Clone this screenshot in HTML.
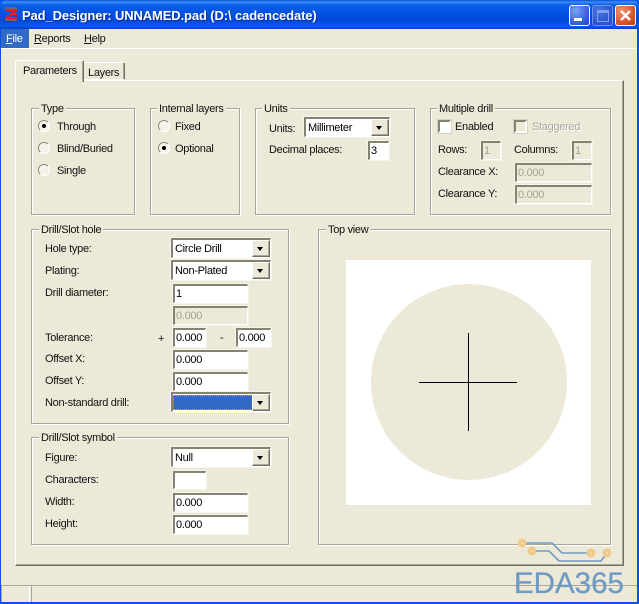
<!DOCTYPE html>
<html><head><meta charset="utf-8">
<style>
html,body{margin:0;padding:0;background:#fff}
#w{position:relative;width:639px;height:604px;overflow:hidden;background:#0a52e6;font:11px/14px "Liberation Sans",sans-serif;letter-spacing:-.3px;color:#111}
#w div,#w span.a{position:absolute;box-sizing:border-box}
.t{white-space:nowrap;margin-top:1px}
.g{border:1px solid #a8a595;box-shadow:1px 1px 0 #fff,inset 1px 1px 0 #fff}
.c{background:#ece9d8;padding:0 2px;line-height:13px;white-space:nowrap;margin-top:1px}
.i{background:#fff;border:1px solid #fff;border-top:2px solid #85826f;border-left:2px solid #85826f;outline:1px solid #f6f4ea;padding-left:1px;line-height:16px;white-space:nowrap;color:#000;font-size:11px}
.o{line-height:18px}
.d{background:#ece9d8;color:#a5a294}
.b{background:#ece9d8;border:1px solid #fff;border-right:1px solid #716f64;border-bottom:1px solid #716f64;box-shadow:inset -1px -1px 0 #aca899;width:18px;height:17px;right:0;top:0}
.b:after{content:"";position:absolute;left:4px;top:6px;border:3.5px solid transparent;border-top:4px solid #000;border-bottom:0}
.r{width:12px;height:12px;border-radius:50%;background:radial-gradient(circle at 60% 60%,#f4f2e8 55%,#fff 70%);border:1px solid;border-color:#8b8878 #fff #fff #8b8878}
.r.on:after{content:"";position:absolute;left:3px;top:3px;width:4px;height:4px;border-radius:50%;background:#000}
.k{width:13px;height:13px;background:#fff;border:2px solid;border-color:#85826f #fff #fff #85826f;outline:1px solid #d5d2c2}
</style></head><body>
<div id="w">
<!-- title bar -->
<div style="left:0;top:0;width:639px;height:29px;border-radius:7px 7px 0 0;background:linear-gradient(#0a4fd6 0,#3a8cf8 2px,#0a5fe8 5px,#0254e4 12px,#0048d8 20px,#0a5ae8 26px,#0040c8 29px)"></div>
<svg style="position:absolute;left:4px;top:7px" width="14" height="15" viewBox="0 0 14 15"><rect x="1" y="0" width="12" height="4" fill="#666"/><rect x="1" y="10" width="12" height="4" fill="#666"/><path d="M2 3H12L3 11H13M5 7H13" fill="none" stroke="#f01818" stroke-width="2"/></svg>
<div style="left:22px;top:7px;white-space:nowrap;font:bold 13px/17px 'Liberation Sans',sans-serif;color:#fff;letter-spacing:-.12px;text-shadow:1px 1px 0 #0a2f9c">Pad_Designer: UNNAMED.pad (D:\ cadencedate)</div>
<div style="left:569px;top:5px;width:21px;height:21px;border:1px solid #fff;border-radius:3px;background:radial-gradient(circle at 30% 25%,#7fa0f4,#2f5fe0 65%,#2048c8)"><div style="left:4px;top:12px;width:8px;height:3px;background:#fff"></div></div>
<div style="left:592px;top:5px;width:21px;height:21px;border:1px solid #6f90ee;border-radius:3px;background:radial-gradient(circle at 30% 25%,#4a74e4,#2a55cc 70%)"><div style="left:4px;top:4px;width:12px;height:12px;border:1px solid #7f9ff0;border-top:3px solid #7f9ff0"></div></div>
<div style="left:615px;top:5px;width:21px;height:21px;border:1px solid #fff;border-radius:3px;background:radial-gradient(circle at 30% 25%,#f0906c,#d8502a 65%,#c03a18)"><svg style="position:absolute;left:3px;top:3px" width="13" height="13"><path d="M2 2L11 11M11 2L2 11" stroke="#fff" stroke-width="2.4"/></svg></div>
<!-- client -->
<div style="left:1px;top:29px;width:636px;height:573px;background:#ece9d8"></div>
<div style="left:1px;top:48px;width:636px;height:1px;background:#fff"></div>
<div style="left:1px;top:29px;width:28px;height:19px;background:#316ac5"></div>
<div class="t" style="left:6px;top:31px;color:#fff"><u>F</u>ile</div>
<div class="t" style="left:34px;top:31px"><u>R</u>eports</div>
<div class="t" style="left:84px;top:31px"><u>H</u>elp</div>
<!-- tab panel -->
<div style="left:15px;top:80px;width:609px;height:486px;border:1px solid;border-color:#fff #716f64 #716f64 #fff;box-shadow:inset -1px -1px 0 #a8a595"></div>
<div style="left:124px;top:80px;width:498px;height:1px;background:#fff"></div>
<div style="left:83px;top:62px;width:42px;height:18px;border:1px solid;border-color:#fff #716f64 #fff #fff;border-radius:2px 2px 0 0;box-shadow:inset -1px 0 0 #a8a595"></div>
<div class="t" style="left:88px;top:65px">Layers</div>
<div style="left:15px;top:60px;width:69px;height:22px;background:#ece9d8;border:1px solid;border-color:#fff #716f64 transparent #fff;border-bottom:0;border-radius:2px 2px 0 0;box-shadow:inset -1px 0 0 #a8a595"></div>
<div class="t" style="left:23px;top:63px">Parameters</div>

<!-- Type -->
<div class="g" style="left:31px;top:108px;width:104px;height:107px"></div><div class="c" style="left:39px;top:102px">Type</div>
<div class="r on" style="left:38px;top:120px"></div><div class="t" style="left:57px;top:119px">Through</div>
<div class="r" style="left:38px;top:142px"></div><div class="t" style="left:57px;top:141px">Blind/Buried</div>
<div class="r" style="left:38px;top:164px"></div><div class="t" style="left:57px;top:163px">Single</div>
<!-- Internal -->
<div class="g" style="left:150px;top:108px;width:90px;height:107px"></div><div class="c" style="left:157px;top:102px">Internal layers</div>
<div class="r" style="left:158px;top:120px"></div><div class="t" style="left:175px;top:119px">Fixed</div>
<div class="r on" style="left:158px;top:142px"></div><div class="t" style="left:175px;top:141px">Optional</div>
<!-- Units -->
<div class="g" style="left:255px;top:108px;width:160px;height:107px"></div><div class="c" style="left:262px;top:102px">Units</div>
<div class="t" style="left:269px;top:121px">Units:</div>
<div class="i o" style="left:304px;top:117px;width:86px;height:20px;padding-left:2px">Millimeter<div class="b"></div></div>
<div class="t" style="left:269px;top:142px">Decimal places:</div>
<div class="i" style="left:368px;top:141px;width:21px;height:19px">3</div>
<!-- Multiple -->
<div class="g" style="left:430px;top:108px;width:181px;height:107px"></div><div class="c" style="left:437px;top:102px">Multiple drill</div>
<div class="k" style="left:438px;top:120px"></div><div class="t" style="left:455px;top:119px">Enabled</div>
<div class="k" style="left:514px;top:120px;background:#ece9d8"></div><div class="t" style="left:532px;top:119px;color:#aca899;text-shadow:1px 1px 0 #fff">Staggered</div>
<div class="t" style="left:438px;top:142px">Rows:</div>
<div class="i d" style="left:481px;top:141px;width:20px;height:19px">1</div>
<div class="t" style="left:514px;top:142px">Columns:</div>
<div class="i d" style="left:572px;top:141px;width:20px;height:19px">1</div>
<div class="t" style="left:438px;top:164px">Clearance X:</div>
<div class="i d" style="left:515px;top:163px;width:77px;height:19px">0.000</div>
<div class="t" style="left:438px;top:186px">Clearance Y:</div>
<div class="i d" style="left:515px;top:185px;width:77px;height:19px">0.000</div>

<!-- Drill/Slot hole -->
<div class="g" style="left:31px;top:229px;width:258px;height:195px"></div><div class="c" style="left:39px;top:223px">Drill/Slot hole</div>
<div class="t" style="left:45px;top:241px">Hole type:</div>
<div class="i o" style="left:171px;top:238px;width:100px;height:20px;padding-left:2px">Circle Drill<div class="b"></div></div>
<div class="t" style="left:45px;top:263px">Plating:</div>
<div class="i o" style="left:171px;top:260px;width:100px;height:20px;padding-left:2px">Non-Plated<div class="b"></div></div>
<div class="t" style="left:45px;top:285px">Drill diameter:</div>
<div class="i" style="left:173px;top:284px;width:75px;height:19px">1</div>
<div class="i d" style="left:173px;top:306px;width:75px;height:19px">0.000</div>
<div class="t" style="left:45px;top:330px">Tolerance:</div>
<div class="t" style="left:158px;top:331px">+</div>
<div class="i" style="left:173px;top:328px;width:33px;height:19px">0.000</div>
<div class="t" style="left:220px;top:330px">-</div>
<div class="i" style="left:236px;top:328px;width:35px;height:19px">0.000</div>
<div class="t" style="left:45px;top:351px">Offset X:</div>
<div class="i" style="left:173px;top:350px;width:75px;height:19px">0.000</div>
<div class="t" style="left:45px;top:373px">Offset Y:</div>
<div class="i" style="left:173px;top:372px;width:75px;height:19px">0.000</div>
<div class="t" style="left:45px;top:395px">Non-standard drill:</div>
<div class="i o" style="left:171px;top:392px;width:100px;height:20px"><div style="left:0;top:1px;width:80px;height:15px;background:#316ac5;outline:1px dotted #e0a020;outline-offset:-1px"></div><div class="b"></div></div>
<!-- Symbol -->
<div class="g" style="left:31px;top:437px;width:258px;height:108px"></div><div class="c" style="left:39px;top:431px">Drill/Slot symbol</div>
<div class="t" style="left:45px;top:450px">Figure:</div>
<div class="i o" style="left:171px;top:447px;width:100px;height:20px;padding-left:2px">Null<div class="b"></div></div>
<div class="t" style="left:45px;top:472px">Characters:</div>
<div class="i" style="left:173px;top:471px;width:33px;height:18px"></div>
<div class="t" style="left:45px;top:494px">Width:</div>
<div class="i" style="left:173px;top:493px;width:75px;height:19px">0.000</div>
<div class="t" style="left:45px;top:516px">Height:</div>
<div class="i" style="left:173px;top:515px;width:75px;height:19px">0.000</div>
<!-- Top view -->
<div class="g" style="left:318px;top:229px;width:293px;height:316px"></div><div class="c" style="left:326px;top:223px">Top view</div>
<svg style="position:absolute;left:346px;top:260px" width="245" height="245"><rect width="245" height="245" fill="#fff"/><circle cx="123" cy="122" r="98" fill="#ece9d8"/><path d="M73 122.5H171M122.500 73V171" stroke="#000" stroke-width="1"/></svg>
<!-- status bar -->
<div style="left:1px;top:585px;width:636px;height:1px;background:#aca899"></div>
<div style="left:1px;top:585px;width:1px;height:17px;background:#aca899"></div>
<div style="left:29px;top:586px;width:1px;height:16px;background:#fff"></div>
<div style="left:31px;top:585px;width:1px;height:17px;background:#aca899"></div>
<!-- watermark -->
<svg style="position:absolute;left:510px;top:532px" width="120" height="36" viewBox="510 532 120 36" fill="none"><path d="M522 543H552L562 553H591M532 551H549L559 561H601L607 553" stroke="#6f9ac4" stroke-width="1.6"/><g fill="#f8dcb0" stroke="#f2c98c" stroke-width="3.4"><circle cx="522" cy="543" r="2.8"/><circle cx="532" cy="551" r="2.8"/><circle cx="591" cy="553" r="2.8"/><circle cx="607" cy="553" r="2.8"/></g></svg>
<div class="t" style="left:514px;top:566px;font-size:29.5px;line-height:33px;letter-spacing:0;color:#6f9ac4;-webkit-text-stroke:.3px #6f9ac4">EDA365</div>
</div>
</body></html>
